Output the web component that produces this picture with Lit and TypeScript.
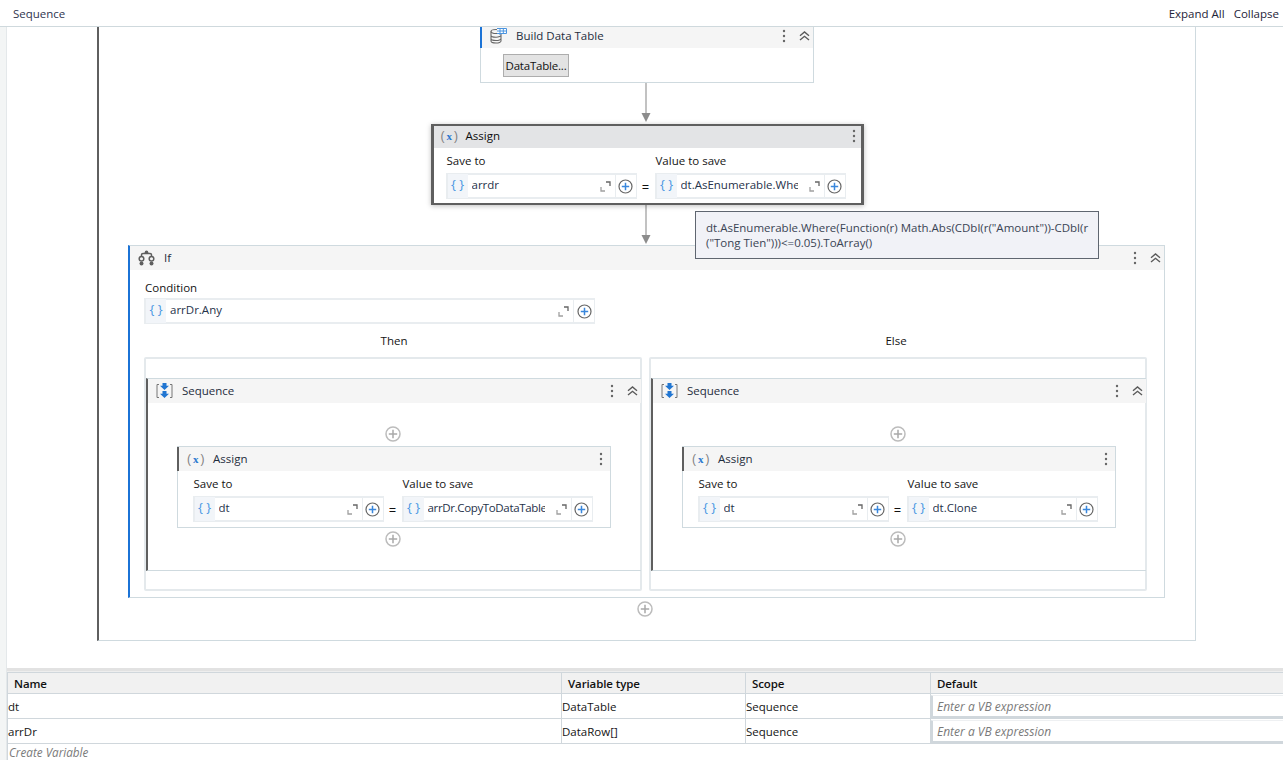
import { LitElement, html, css } from "lit";
import { customElement } from "lit/decorators.js";

const kebab = html`<svg class="ic" width="4" height="14" viewBox="0 0 4 14"><g fill="#666"><circle cx="2" cy="2" r="1.2"/><circle cx="2" cy="7" r="1.2"/><circle cx="2" cy="12" r="1.2"/></g></svg>`;
const chevrons = html`<svg class="ic" width="11" height="10" viewBox="0 0 11 10"><path d="M1 4.700 5.500 1 10 4.700M1 9 5.500 5.300 10 9" fill="none" stroke="#5a5a5a" stroke-width="1.400"/></svg>`;
const expand = html`<svg class="ic" width="11" height="11" viewBox="0 0 11 11"><path d="M6 1h4v4" fill="none" stroke="#666" stroke-width="1.300"/><path d="M1 6v4h4" fill="none" stroke="#a0a0a0" stroke-width="1.300"/></svg>`;
const fieldPlus = html`<svg class="ic" width="15" height="15" viewBox="0 0 15 15"><circle cx="7.500" cy="7.500" r="6.500" fill="none" stroke="#666" stroke-width="1.200"/><path d="M7.500 3.800v7.400M3.800 7.500h7.400" stroke="#3a87dc" stroke-width="1.500"/></svg>`;
const dbIcon = html`<svg class="ic" width="17" height="16" viewBox="0 0 17 16"><g fill="none" stroke="#666" stroke-width="1.100"><ellipse cx="6" cy="3.500" rx="5" ry="2"/><path d="M1 3.500v9.500c0 1.100 2.200 2 5 2s5-.9 5-2V3.500M1 7.200c0 1.100 2.200 2 5 2s5-.9 5-2M1 10.500c0 1.100 2.200 2 5 2s5-.9 5-2"/></g><path d="M7 .5h9.500v5H7M10 .5v6.500M13.300 .5v5M7 3h9.500" fill="#fff" stroke="#4a94e0" stroke-width="1"/></svg>`;
const ifIcon = html`<svg class="ic" width="17" height="16" viewBox="0 0 17 16"><g fill="none" stroke="#5f5f5f" stroke-width="1.500"><path d="M3.500 6.500V4.800Q3.500 3.500 5 3.500H12Q13.500 3.500 13.500 4.800V6.500"/><circle cx="3.500" cy="8.800" r="2.300"/><circle cx="13.500" cy="8.800" r="2.300"/></g><g fill="#5f5f5f"><circle cx="8.500" cy="2.300" r="1.800"/><circle cx="3.500" cy="13.600" r="2"/><circle cx="13.500" cy="13.600" r="2"/></g></svg>`;
const seqIcon = html`<svg class="ic" width="17" height="16" viewBox="0 0 17 16"><path d="M3 1.500H1v13h2M14 1.500h2v13h-2" fill="none" stroke="#777" stroke-width="1"/><path d="M6.500 0h4v2.800H13L8.500 7 4 2.800h2.500zM6.500 8h4v2.800H13L8.500 15 4 10.800h2.500z" fill="#2176d2"/></svg>`;
const assignIcon = html`<span class="asg"><span class="paren">(</span><span class="x">x</span><span class="paren">)</span></span>`;

function standalonePlus(cls = "") {
  return html`<svg class="addp ${cls}" width="16" height="16" viewBox="0 0 16 16"><circle cx="8" cy="8" r="7" fill="#fff" stroke="#bcbcbc" stroke-width="1.500"/><path d="M8 3.800v8.400M3.800 8h8.400" stroke="#a9a9a9" stroke-width="1.500"/></svg>`;
}

function field(value: string, cls = "") {
  return html`<div class="field ${cls}">
    <span class="brace">{ }</span>
    <span class="input"><span class="val">${value}</span>${expand}</span>
    <span class="plusbox">${fieldPlus}</span>
  </div>`;
}

function assignBody(target: string, value: string, valueCls = "") {
  return html`<div class="asg-body">
    <div class="col"><div class="lbl">Save to</div>${field(target)}</div>
    <div class="eq">=</div>
    <div class="col"><div class="lbl">Value to save</div>${field(value, valueCls)}</div>
  </div>`;
}

function innerAssign(target: string, value: string, valueCls = "") {
  return html`<div class="card asg-card">
    <div class="hdr bar-dark"><span class="hico">${assignIcon}</span><span class="title">Assign</span><span class="kb">${kebab}</span></div>
    ${assignBody(target, value, valueCls)}
  </div>`;
}

function branch(target: string, value: string, valueCls = "") {
  return html`<div class="box">
    <div class="seq">
      <div class="hdr"><span class="hico">${seqIcon}</span><span class="title">Sequence</span><span class="kb">${kebab}</span><span class="cv">${chevrons}</span></div>
      <div class="seq-body">
        ${standalonePlus()}
        ${innerAssign(target, value, valueCls)}
        ${standalonePlus()}
      </div>
    </div>
  </div>`;
}

const connector = html`<svg class="conn" width="12" height="40" viewBox="0 0 12 40"><path d="M6 0V31" stroke="#c2c2c2" stroke-width="2"/><path d="M1.500 30h9L6 39z" fill="#8c8c8c"/></svg>`;

@customElement("app-root")
export class AppRoot extends LitElement {
  static styles = css`
    :host { display: block; width: 1283px; height: 760px; overflow: hidden; background: #fff; color: #141414;
      font-family: "Open Sans", "Noto Sans", sans-serif; font-size: 11.5px; line-height: 16px; }
    .page { display: flex; height: 760px; }
    .strip { width: 6px; background: #f3f5f5; border-right: 1px solid #e4e8ea; flex: none; }
    .main { flex: 1; min-width: 0; display: flex; flex-direction: column; }
    .top { flex: none; display: flex; align-items: center; margin-left: -7px; border-bottom: 1px solid #cfd9dd; padding: 2px 4px 0 13px; box-sizing: content-box; height: 24px; color: #2f3550; background: #fff; position: relative; }
    .top .sp { flex: 1; }
    .top .act { margin-left: 9px; color: #1e2438; }
    .canvas { position: relative; height: 641px; flex: none; overflow: hidden; }
    .outer { margin-left: 90px; width: 1099px; height: 614px; box-sizing: border-box; border-left: 2.500px solid #5f5f5f; border-right: 1px solid #cfdadf; border-bottom: 1px solid #cfdadf; display: flex; flex-direction: column; align-items: center; }
    .ic { display: block; flex: none; }
    .conn { display: block; margin-right: 2px; flex: none; }
    .conn.first { height: 41px; }
    .card { box-sizing: border-box; border: 1px solid #cfdadf; background: #fff; flex: none; }
    .hdr { height: 24px; display: flex; align-items: center; background: #f5f5f5; padding-left: 8px; color: #1f2d3d; box-sizing: border-box; }
    .hico { width: 26px; flex: none; display: flex; align-items: center; }
    .title { flex: 1; }
    .kb, .cv { width: 20px; flex: none; display: flex; justify-content: center; }
    .hdr > :last-child { margin-right: -1px; }
    .bar-blue { border-left: 2px solid #1b73d6; margin-left: -1px; }
    .bar-dark { border-left: 2px solid #5f5f5f; margin-left: -1px; }
    .build { width: 334px; height: 56px; border-top: none; }
    .build .hdr { margin-top: -3px; }
    .dtbtn { margin: 6px 0 0 22px; width: 66px; height: 23px; box-sizing: border-box; border: 1px solid #adadad; background: #e3e3e3; display: flex; align-items: center; justify-content: center; color: #111; letter-spacing: -.2px; }
    .selected { width: 433px; height: 81px; border: 2px solid #5f5f5f; border-left-width: 3px; border-right-width: 3px; box-shadow: 0 1px 5px rgba(0,0,0,.25); position: relative; }
    .selected .hdr { height: 22px; background: #e3e4e6; padding: 0 0 3px 7px; color: #0c0c0c; }
    .selected .hico { width: 25px; }
    .selected .kb { width: 14px; margin-right: 0; }
    .selected .asg-body { padding-bottom: 4px; }
    .asg-body { display: flex; justify-content: center; align-items: flex-end; padding: 5px 3px 5px 0; }
    .col { width: 191px; }
    .lbl { height: 16px; margin: 0 0 4px 1px; }
    .eq { width: 18px; height: 26px; line-height: 28px; text-align: center; flex: none; font-size: 13px; color: #111; }
    .field { height: 26px; box-sizing: border-box; display: flex; border: 2px solid #e9edf0; background: #e9edf0; }
    .brace { width: 20px; flex: none; background: #f2f5f9; color: #4a97e3; text-align: center; line-height: 21px; font-size: 13px; margin: -1px 0; }
    .input { flex: 1; background: #fff; display: flex; align-items: center; padding: 0 4px 0 4px; min-width: 0; color: #26324a; }
    .val { flex: 1; min-width: 0; overflow: hidden; white-space: nowrap; margin-bottom: 2px; }
    .col .val { flex: none; width: 117px; margin-right: auto; }
    .tight .val { letter-spacing: -.35px; }
    .plusbox { width: 20px; margin-left: 1px; margin-right: -1px; background: #fff; flex: none; display: flex; align-items: center; justify-content: center; }
    .asg { display: flex; align-items: center; font-family: "Liberation Sans", sans-serif; }
    .paren { color: #808080; font-size: 12px; font-weight: 400; }
    .x { color: #2b78cf; font-weight: bold; font-size: 11px; margin: 0 2px; font-family: "Liberation Serif", serif; }
    .iff { width: 1037px; height: 353px; margin-right: 1px; border-left: 2px solid #1b73d6; }
    .iff-body { padding: 10px 0 0 14px; }
    .iff-body > .lbl { margin: 0 0 2px 1px; }
    .cond { width: 451px; }
    .branches { display: grid; grid-template-columns: 498px 498px; column-gap: 7px; margin-top: 9px; }
    .blabel { text-align: center; height: 16px; margin-bottom: 8px; }
    .blabel.then { padding-left: 2px; }
    .blabel.els { padding-right: 4px; }
    .box { height: 234px; box-sizing: border-box; border: 2px solid #e4e9ec; border-radius: 2px; padding-top: 19px; }
    .seq { height: 193px; box-sizing: border-box; border-top: 1px solid #cfdadf; border-bottom: 1px solid #cfdadf; border-left: 2px solid #5f5f5f; margin-right: -1px; }
    .seq-body { display: flex; flex-direction: column; align-items: center; padding: 23px 1px 0 0; }
    .addp { display: block; flex: none; margin-right: 2px; }
    .asg-card { width: 434px; height: 82px; margin: 4px 0 3px; }
    .addp.final { margin: 3px 5px 0 0; }
    .tip { position: absolute; left: 688px; top: 184px; width: 404px; height: 48px; box-sizing: border-box; border: 1px solid #5f6670; background: #f1f2f7; padding: 8px 0 0 10px; color: #3a4454; line-height: 15px; white-space: nowrap; }
    .split { height: 3px; flex: none; background: #e2e2e2; border-bottom: 1px solid #eee; }
    .vars { display: grid; grid-template-columns: 554px 184px 185px 1fr; grid-template-rows: 21px 25px 25px 16px; border-top: 1px solid #d0d7dc; border-left: 1px solid #d0d7dc; }
    .th { box-sizing: border-box; background: #f1f1f1; border-right: 1px solid #d0d7dc; border-bottom: 1px solid #d0d7dc; padding-left: 6px; font-weight: 600; line-height: 21px; color: #111; letter-spacing: -.1px; }
    .th.last { border-right: none; }
    .td { box-sizing: border-box; border-right: 1px solid #d0d7dc; border-bottom: 1px solid #d0d7dc; line-height: 25px; color: #141414; }
    .def { box-sizing: border-box; border-left: 3px solid #d0d7dc; margin-left: -1px; border-bottom: 3px solid #d0d7dc; border-top: 1px solid #eef0f2; margin-top: 1px; padding-left: 4px; font-style: italic; font-size: 12px; color: #7a7a7a; line-height: 21px; }
    .create { grid-column: 1 / -1; font-style: italic; font-size: 11.7px; color: #7a7a7a; padding-left: 1px; line-height: 16px; }
  `;

  render() {
    return html`<div class="page">
      <div class="strip"></div>
      <div class="main">
        <div class="top"><span>Sequence</span><span class="sp"></span><span class="act">Expand All</span><span class="act">Collapse</span></div>
        <div class="canvas">
          <div class="outer">
            <div class="card build">
              <div class="hdr bar-blue"><span class="hico">${dbIcon}</span><span class="title">Build Data Table</span><span class="kb">${kebab}</span><span class="cv">${chevrons}</span></div>
              <div class="dtbtn">DataTable...</div>
            </div>
            <svg class="conn first" width="12" height="41" viewBox="0 0 12 41"><path d="M6 0V31" stroke="#c2c2c2" stroke-width="2"/><path d="M1.500 30h9L6 39z" fill="#8c8c8c"/></svg>
            <div class="card selected">
              <div class="hdr"><span class="hico">${assignIcon}</span><span class="title">Assign</span><span class="kb">${kebab}</span></div>
              ${assignBody("arrdr", "dt.AsEnumerable.Where(Function(r) Math.Abs(CDbl(r(\"Amount\"))-CDbl(r(\"Tong Tien\")))<=0.05).ToArray()")}
            </div>
            ${connector}
            <div class="card iff">
              <div class="hdr"><span class="hico">${ifIcon}</span><span class="title">If</span><span class="kb">${kebab}</span><span class="cv">${chevrons}</span></div>
              <div class="iff-body">
                <div class="lbl">Condition</div>
                ${field("arrDr.Any", "cond")}
                <div class="branches">
                  <div class="blabel then">Then</div><div class="blabel els">Else</div>
                  ${branch("dt", "arrDr.CopyToDataTable()", "tight")}
                  ${branch("dt", "dt.Clone")}
                </div>
              </div>
            </div>
            ${standalonePlus("final")}
          </div>
          <div class="tip">dt.AsEnumerable.Where(Function(r) Math.Abs(CDbl(r("Amount"))-CDbl(r<br />("Tong Tien")))&lt;=0.05).ToArray()</div>
        </div>
        <div class="split"></div>
        <div class="vars">
          <div class="th">Name</div><div class="th">Variable type</div><div class="th">Scope</div><div class="th last">Default</div>
          <div class="td">dt</div><div class="td">DataTable</div><div class="td">Sequence</div><div class="def">Enter a VB expression</div>
          <div class="td">arrDr</div><div class="td">DataRow[]</div><div class="td">Sequence</div><div class="def">Enter a VB expression</div>
          <div class="create">Create Variable</div>
        </div>
      </div>
    </div>`;
  }
}
